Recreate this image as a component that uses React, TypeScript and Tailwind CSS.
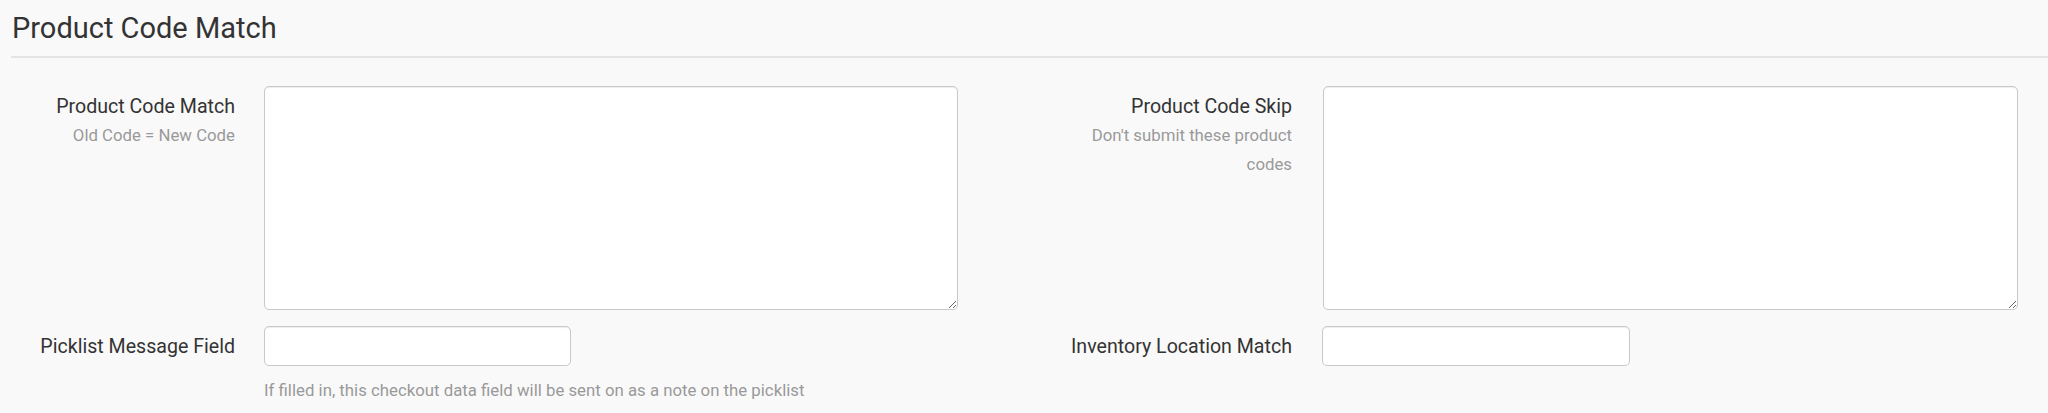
import React from "react";

const fieldBox =
  "block bg-white border border-[#c9c9c9] rounded-[5px] shadow-[inset_0_1px_1px_rgba(0,0,0,0.075)] outline-none";

export default function App() {
  return (
    <div className="min-h-[413px] w-[2048px] bg-[#f9f9f9] font-['Roboto',_'Liberation_Sans',_sans-serif] text-[#333]">
      <div className="ml-[11px] border-b-2 border-[#e4e4e4] pt-[11px] pb-[10px]">
        <h1 className="pl-[1px] text-[29px] leading-[34.8px] font-normal text-[#333]">
          Product Code Match
        </h1>
      </div>

      <div className="mt-[28px] flex">
        {/* left column */}
        <div className="ml-[5px] flex flex-col gap-[16px]">
          <div className="flex gap-[29px]">
            <div className="w-[230px] pt-[7px] text-right">
              <div className="text-[19.6px] leading-[28px] text-[#333]">Product Code Match</div>
              <div className="text-[16.8px] leading-[29px] text-[#999]">Old Code = New Code</div>
            </div>
            <textarea className={fieldBox + " w-[694px] h-[224px]"} />
          </div>
          <div className="flex gap-[29px]">
            <div className="w-[230px] pt-[7px] text-right">
              <div className="text-[19.6px] leading-[28px] text-[#333]">Picklist Message Field</div>
            </div>
            <div className="flex flex-col">
              <input type="text" className={fieldBox + " w-[307px] h-[40px]"} />
              <div className="mt-[10px] text-[16.8px] leading-[29px] text-[#999]">
                If filled in, this checkout data field will be sent on as a note on the picklist
              </div>
            </div>
          </div>
        </div>

        {/* right column */}
        <div className="ml-[104px] flex flex-col gap-[16px]">
          <div className="flex gap-[31px]">
            <div className="w-[230px] pt-[7px] text-right">
              <div className="text-[19.6px] leading-[28px] text-[#333]">Product Code Skip</div>
              <div className="text-[16.8px] leading-[29px] text-[#999]">
                Don't submit these product codes
              </div>
            </div>
            <textarea className={fieldBox + " w-[695px] h-[224px]"} />
          </div>
          <div className="flex gap-[30px]">
            <div className="w-[230px] pt-[7px] text-right">
              <div className="text-[19.6px] leading-[28px] text-[#333]">Inventory Location Match</div>
            </div>
            <input type="text" className={fieldBox + " w-[308px] h-[40px]"} />
          </div>
        </div>
      </div>
    </div>
  );
}
